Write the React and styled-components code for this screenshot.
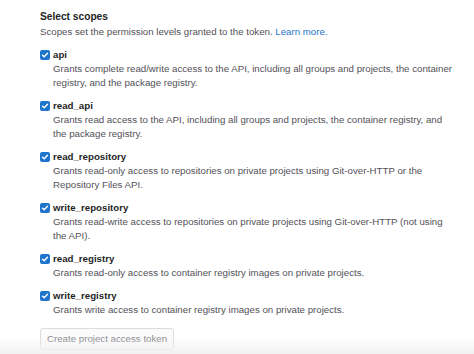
import React from 'react'
import styled, { createGlobalStyle } from 'styled-components'

const Global = createGlobalStyle`
  html, body { margin: 0; padding: 0; background: #fff; }
  body { font-family: "Liberation Sans", Arial, sans-serif; }
`

const Page = styled.div`
  width: 474px;
  height: 354px;
  overflow: hidden;
  position: relative;
  background: #fff;
`

const Section = styled.div`
  padding: 9px 0 0 40px;
  display: flex;
  flex-direction: column;
`

const Title = styled.h3`
  margin: 0;
  font-size: 10.2px;
  font-weight: 700;
  color: #1f1f1f;
  line-height: 15px;
`

const Help = styled.p`
  margin: 1px 0 0;
  font-size: 9.7px;
  color: #535158;
  line-height: 14px;
`

const Link = styled.a`
  color: #1f75cb;
  text-decoration: none;
`

const List = styled.div`
  display: flex;
  flex-direction: column;
  gap: 9px;
  margin-top: 9px;
`

const Scope = styled.label`
  display: grid;
  grid-template-columns: 13px 1fr;
  align-items: start;
`

const Box = styled.span`
  width: 10px;
  height: 10px;
  margin-top: 2px;
  border-radius: 2px;
  background: #1f75cb;
  display: flex;
  align-items: center;
  justify-content: center;
`

const Name = styled.div`
  font-size: 9.7px;
  font-weight: 700;
  color: #1f1f1f;
  line-height: 14px;
`

const Desc = styled.div`
  font-size: 9.7px;
  color: #535158;
  line-height: 14px;
  max-width: 400px;
`

const Button = styled.button`
  margin-top: 11px;
  align-self: flex-start;
  font-family: inherit;
  font-size: 9.7px;
  color: #89888d;
  background: #fbfbfb;
  border: 1px solid #dcdcde;
  border-radius: 3px;
  padding: 3px 6px;
  line-height: 14px;
`

const Fade = styled.div`
  position: absolute;
  left: 0;
  right: 0;
  bottom: 0;
  height: 16px;
  background: linear-gradient(#ffffff00, #f1f1f1);
  pointer-events: none;
`

const scopes = [
  ['api', 'Grants complete read/write access to the API, including all groups and projects, the container registry, and the package registry.'],
  ['read_api', 'Grants read access to the API, including all groups and projects, the container registry, and the package registry.'],
  ['read_repository', 'Grants read-only access to repositories on private projects using Git-over-HTTP or the Repository Files API.'],
  ['write_repository', 'Grants read-write access to repositories on private projects using Git-over-HTTP (not using the API).'],
  ['read_registry', 'Grants read-only access to container registry images on private projects.'],
  ['write_registry', 'Grants write access to container registry images on private projects.'],
]

const Check = () => (
  <Box>
    <svg width="8" height="8" viewBox="0 0 8 8">
      <path d="M1.5 4.2 L3.2 5.8 L6.5 2.2" stroke="#fff" strokeWidth="1.4" fill="none" strokeLinecap="round" strokeLinejoin="round" />
    </svg>
  </Box>
)

export default function App() {
  return (
    <Page>
      <Global />
      <Section>
        <Title>Select scopes</Title>
        <Help>Scopes set the permission levels granted to the token. <Link href="#">Learn more.</Link></Help>
        <List>
          {scopes.map(([name, desc]) => (
            <Scope key={name}>
              <Check />
              <div>
                <Name>{name}</Name>
                <Desc>{desc}</Desc>
              </div>
            </Scope>
          ))}
        </List>
        <Button>Create project access token</Button>
      </Section>
      <Fade />
    </Page>
  )
}
